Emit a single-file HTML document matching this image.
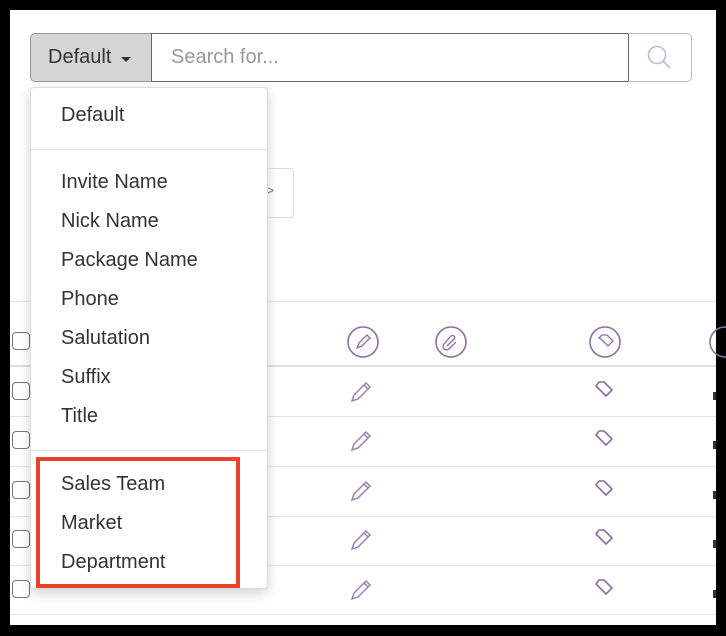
<!DOCTYPE html>
<html><head><style>
*{box-sizing:border-box;margin:0;padding:0}
body{width:726px;height:636px;background:#000;position:relative;overflow:hidden;font-family:"Liberation Sans",Arial,sans-serif}
.page{position:absolute;left:10px;top:10px;width:706px;height:615px;background:#fff}
.a{position:absolute}
.hl{position:absolute;left:10px;width:706px;height:1px;background:#e3e3e3}
.cb{position:absolute;left:12px;width:18px;height:18px;border:1.5px solid #777;border-radius:4px;background:#fff}
.menu{position:absolute;left:30px;top:87px;width:238px;height:502px;background:#fff;border:1px solid #ddd;border-radius:4px;box-shadow:0 4px 12px rgba(0,0,0,.18)}
.it{position:absolute;left:30px;font-size:20px;color:#333}
</style></head><body>
<div class="page"></div>
<div class="a" style="left:30px;top:33px;width:122px;height:49px;background:#d5d5d5;border:1px solid #999;border-radius:5px 0 0 5px"></div>
<div class="a" style="left:48px;top:46px;font-size:20px;color:#333">Default</div>
<div class="a" style="left:121px;top:57px;width:0;height:0;border-left:5px solid transparent;border-right:5px solid transparent;border-top:5px solid #333"></div>
<div class="a" style="left:151px;top:33px;width:478px;height:49px;border:1.5px solid #6e5d78"></div>
<div class="a" style="left:171px;top:46px;font-size:20px;color:#999">Search for...</div>
<div class="a" style="left:628px;top:33px;width:64px;height:49px;border:1px solid #bbb;border-left:none;border-radius:0 5px 5px 0"></div>
<svg class="a" style="left:644px;top:42px" width="30" height="30" viewBox="0 0 30 30"><circle cx="13" cy="13" r="8.5" fill="none" stroke="#c9b8d8" stroke-width="1.6"/><line x1="19" y1="19" x2="26" y2="26" stroke="#c9b8d8" stroke-width="1.8"/></svg>
<div class="a" style="left:200px;top:168px;width:94px;height:50px;border:1px solid #ddd;border-radius:4px"></div>
<div class="a" style="left:266px;top:182px;font-size:14px;color:#8a6fa5">&gt;</div>
<div class="hl" style="top:301px"></div>
<div class="hl" style="top:365px;height:2px;background:#ddd"></div>
<div class="hl" style="top:416px"></div>
<div class="hl" style="top:466px"></div>
<div class="hl" style="top:516px"></div>
<div class="hl" style="top:565px"></div>
<div class="hl" style="top:614px"></div>
<div class="cb" style="top:332px"></div>
<div class="cb" style="top:382px"></div>
<div class="cb" style="top:431px"></div>
<div class="cb" style="top:481px"></div>
<div class="cb" style="top:530px"></div>
<div class="cb" style="top:580px"></div>
<svg class="a" style="left:346px;top:325px" width="34" height="34"><circle cx="17" cy="17" r="15" fill="none" stroke="#8a6fa5" stroke-width="1.6"/><path d="M11 23l2-5 8-8 3 3-8 8z" fill="none" stroke="#8a6fa5" stroke-width="1.3"/></svg>
<svg class="a" style="left:434px;top:325px" width="34" height="34"><circle cx="17" cy="17" r="15" fill="none" stroke="#8a6fa5" stroke-width="1.6"/><path d="M13 21l7-7a2 2 0 0 0-3-3l-7 8a3.5 3.5 0 0 0 5 5l7-7" fill="none" stroke="#8a6fa5" stroke-width="1.3"/></svg>
<svg class="a" style="left:588px;top:325px" width="34" height="34"><circle cx="17" cy="17" r="15" fill="none" stroke="#8a6fa5" stroke-width="1.6"/><path d="M11 13l3-3h5l6 6-5 5-7-7z" fill="none" stroke="#8a6fa5" stroke-width="1.3"/></svg>
<svg class="a" style="left:708px;top:325px" width="18" height="34"><circle cx="17" cy="17" r="15" fill="none" stroke="#8a6fa5" stroke-width="1.6"/></svg>
<svg class="a" style="left:349px;top:378px" width="26" height="26"><path d="M3 23l2-6 12-12 4 4-12 12z M15 7l4 4" fill="none" stroke="#9a80b5" stroke-width="1.5"/></svg>
<svg class="a" style="left:349px;top:427px" width="26" height="26"><path d="M3 23l2-6 12-12 4 4-12 12z M15 7l4 4" fill="none" stroke="#9a80b5" stroke-width="1.5"/></svg>
<svg class="a" style="left:349px;top:477px" width="26" height="26"><path d="M3 23l2-6 12-12 4 4-12 12z M15 7l4 4" fill="none" stroke="#9a80b5" stroke-width="1.5"/></svg>
<svg class="a" style="left:349px;top:526px" width="26" height="26"><path d="M3 23l2-6 12-12 4 4-12 12z M15 7l4 4" fill="none" stroke="#9a80b5" stroke-width="1.5"/></svg>
<svg class="a" style="left:349px;top:576px" width="26" height="26"><path d="M3 23l2-6 12-12 4 4-12 12z M15 7l4 4" fill="none" stroke="#9a80b5" stroke-width="1.5"/></svg>
<svg class="a" style="left:594px;top:380px" width="22" height="22"><path d="M2 6l3-4h5l8 8-6 6-8-8z" fill="none" stroke="#8a6fa5" stroke-width="1.6" stroke-linejoin="round"/></svg>
<svg class="a" style="left:594px;top:429px" width="22" height="22"><path d="M2 6l3-4h5l8 8-6 6-8-8z" fill="none" stroke="#8a6fa5" stroke-width="1.6" stroke-linejoin="round"/></svg>
<svg class="a" style="left:594px;top:479px" width="22" height="22"><path d="M2 6l3-4h5l8 8-6 6-8-8z" fill="none" stroke="#8a6fa5" stroke-width="1.6" stroke-linejoin="round"/></svg>
<svg class="a" style="left:594px;top:528px" width="22" height="22"><path d="M2 6l3-4h5l8 8-6 6-8-8z" fill="none" stroke="#8a6fa5" stroke-width="1.6" stroke-linejoin="round"/></svg>
<svg class="a" style="left:594px;top:578px" width="22" height="22"><path d="M2 6l3-4h5l8 8-6 6-8-8z" fill="none" stroke="#8a6fa5" stroke-width="1.6" stroke-linejoin="round"/></svg>
<div class="a" style="left:713px;top:392px;width:3px;height:8px;background:#333"></div>
<div class="a" style="left:713px;top:441px;width:3px;height:8px;background:#333"></div>
<div class="a" style="left:713px;top:491px;width:3px;height:8px;background:#333"></div>
<div class="a" style="left:713px;top:540px;width:3px;height:8px;background:#333"></div>
<div class="a" style="left:713px;top:590px;width:3px;height:8px;background:#333"></div>
<div class="menu">
<div class="it" style="top:16px">Default</div>
<div class="a" style="left:0;top:61px;width:236px;height:1px;background:#e5e5e5"></div>
<div class="it" style="top:83px">Invite Name</div>
<div class="it" style="top:122px">Nick Name</div>
<div class="it" style="top:161px">Package Name</div>
<div class="it" style="top:200px">Phone</div>
<div class="it" style="top:239px">Salutation</div>
<div class="it" style="top:278px">Suffix</div>
<div class="it" style="top:317px">Title</div>
<div class="a" style="left:0;top:362px;width:236px;height:1px;background:#e5e5e5"></div>
<div class="it" style="top:385px">Sales Team</div>
<div class="it" style="top:424px">Market</div>
<div class="it" style="top:463px">Department</div>
</div>
<div class="a" style="left:36px;top:457px;width:204px;height:131px;border:4px solid #e8412c"></div>
</body></html>
